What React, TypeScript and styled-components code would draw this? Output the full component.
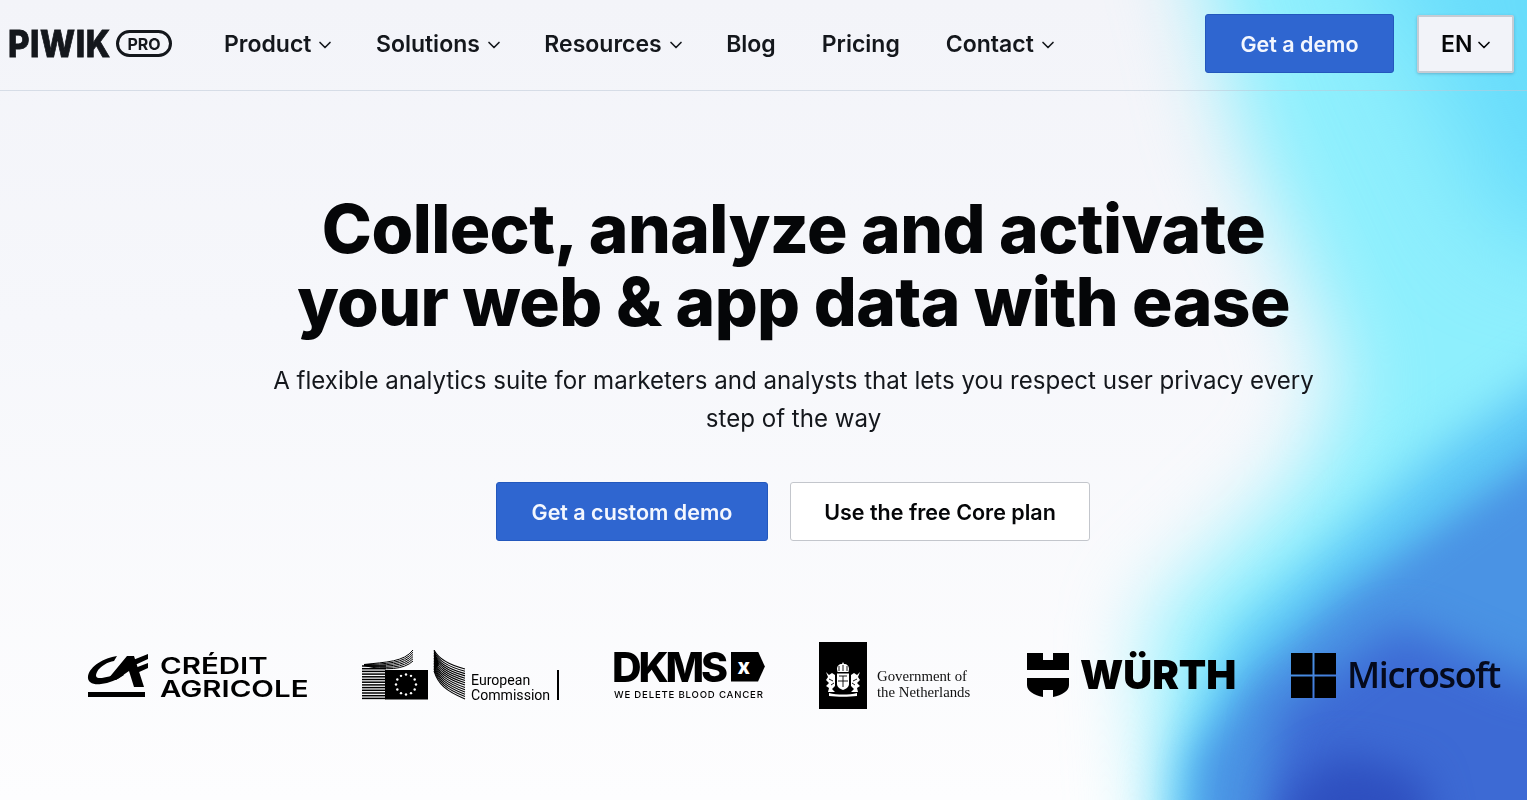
import React from 'react';
import styled, { createGlobalStyle } from 'styled-components';
import { ChevronDown } from 'lucide-react';

const GlobalStyle = createGlobalStyle`
  html, body {
    margin: 0;
    padding: 0;
    overflow: hidden;
  }
  * {
    box-sizing: border-box;
  }
`;

const navItems = [
  { label: 'Product', menu: true },
  { label: 'Solutions', menu: true },
  { label: 'Resources', menu: true },
  { label: 'Blog', menu: false },
  { label: 'Pricing', menu: false },
  { label: 'Contact', menu: true },
];

// soft colour shapes behind the page, painted bottom to top
const glows = [
  { color: '#8eeffd', blur: 42, points: [[1180, -120], [1700, -120], [1700, 900], [1170, 900], [1150, 620], [1300, 480], [1345, 384], [1300, 270], [1240, 135]] },
  { color: '#68dcfb', blur: 50, points: [[1340, -120], [1700, -120], [1700, 260], [1500, 230]] },
  { color: '#5cc6f6', blur: 24, points: [[1700, 270], [1700, 900], [1165, 900], [1175, 760], [1235, 633], [1336, 542], [1437, 452]] },
  { color: '#4a93e4', blur: 18, points: [[1700, 340], [1700, 900], [1190, 900], [1200, 760], [1250, 680], [1336, 600], [1527, 465]] },
  { color: '#3d6ad4', blur: 22, points: [[1400, 625], [1527, 680], [1700, 700], [1700, 900], [1250, 900], [1280, 710]] },
  { color: '#2e4fbf', blur: 20, points: [[1290, 790], [1340, 755], [1420, 775], [1440, 860], [1280, 860]] },
];

// the shape box starts 200px above the page so a glow is not cut at the top edge
const toPolygon = (points: number[][]) => points.map(([x, y]) => `${x}px ${y + 200}px`).join(', ');

const CreditMark = () => (
  <svg width="62" height="43" viewBox="0 0 62 43">
    <path d="M30 2 C17 4 3 12 1 22 C0 29 7 31 14 30 C22 29 30 26 37 21 L33 17 C26 22 18 24 13 24 C9 24 8 22 10 18 C13 12 21 8 27 7 Z" fill="#000" />
    <path d="M40 2 L47 2 L57 33 L47 33 L42 17 L29 26 L21 25 Z" fill="#000" />
    <path d="M46 6 L61 0 L61 5 L48 11 Z M48 14 L61 9 L61 14 L50 19 Z" fill="#000" />
    <rect x="1" y="38" width="57" height="5" fill="#000" />
  </svg>
);

const CommissionMark = () => (
  <svg width="104" height="50" viewBox="0 0 104 50">
    {Array.from({ length: 13 }).map((_, i) => (
      <path key={i} d={`M0 ${16 + i * 2.7} H24`} stroke="#000" strokeWidth="1.5" fill="none" />
    ))}
    {Array.from({ length: 6 }).map((_, i) => (
      <path
        key={i}
        d={`M2 ${14.5 + i * 0.2} C24 ${12 + i * 1.8} 42 ${12 + i * 1.5} 51 ${i * 2.2}`}
        stroke="#000"
        strokeWidth="1"
        fill="none"
      />
    ))}
    <rect x="23" y="20" width="43" height="29.5" fill="#000" />
    {Array.from({ length: 12 }).map((_, i) => {
      const a = (i * Math.PI) / 6;
      return <circle key={i} cx={44 + 10 * Math.cos(a)} cy={34.5 + 10 * Math.sin(a)} r="1.2" fill="#fff" />;
    })}
    {Array.from({ length: 14 }).map((_, i) => (
      <path
        key={i}
        d={`M72 ${i * 1.6} C76 ${8 + i * 2} 84 ${14 + i * 2.1} 103 ${19 + i * 2.3}`}
        stroke="#000"
        strokeWidth="1.1"
        fill="none"
      />
    ))}
    <path d="M72 0 L77 14 L72 22 Z" fill="#000" />
  </svg>
);

const CrestMark = () => (
  <svg width="48" height="67" viewBox="0 0 48 67">
    <rect width="48" height="67" fill="#000" />
    <g fill="#fff">
      <path d="M24 20 L25 22 C28 22 30 24 30 27 L29.5 30 H18.5 L18 27 C18 24 20 22 23 22 Z" />
      <path d="M18 31.5 H30 V42 C30 45 27 47 24 48 C21 47 18 45 18 42 Z" />
      <path d="M7 30 L10 33 L13 31 L16 33 L16 44 L13 47 L16 50 L9 50 L10 46 L7 44 L10 41 L7 38 L9 35 Z" />
      <path d="M41 30 L38 33 L35 31 L32 33 L32 44 L35 47 L32 50 L39 50 L38 46 L41 44 L38 41 L41 38 L39 35 Z" />
      <path d="M10 51 C18 53 30 53 38 51 L38 54 C30 55 18 55 10 54 Z" />
    </g>
    <g stroke="#000" strokeWidth="0.9" fill="none">
      <path d="M20 24 V29 M24 23 V29 M28 24 V29" />
      <path d="M20 34 H28 M24 34 V45 M19 39 H29" />
      <path d="M10 37 L14 39 M12 43 L15 41 M38 37 L34 39 M36 43 L33 41" />
    </g>
  </svg>
);

const ShieldMark = () => (
  <svg width="42" height="44" viewBox="0 0 42 44">
    <path d="M0 0 H16 V7 H26 V0 H42 V17 H0 Z" fill="#000" />
    <path d="M0 25 H42 V32 C42 38 35 42 26 44 V37 H16 V44 C7 42 0 38 0 32 Z" fill="#000" />
  </svg>
);

const WindowsMark = () => (
  <svg width="45" height="45" viewBox="0 0 45 45">
    <rect width="21.5" height="21.5" fill="#000" />
    <rect x="23.5" width="21.5" height="21.5" fill="#000" />
    <rect y="23.5" width="21.5" height="21.5" fill="#000" />
    <rect x="23.5" y="23.5" width="21.5" height="21.5" fill="#000" />
  </svg>
);

export default function App() {
  return (
    <Page>
      <GlobalStyle />
      <Backdrop>
        {glows.map((glow) => (
          <Glow key={glow.color} $blur={glow.blur}>
            <GlowShape $color={glow.color} $shape={toPolygon(glow.points)} />
          </Glow>
        ))}
      </Backdrop>

      <Content>
        <Header>
          <Brand>
            <BrandName>PIWIK</BrandName>
            <BrandPill>PRO</BrandPill>
          </Brand>
          <Nav>
            {navItems.map((item) => (
              <NavLink key={item.label}>
                {item.label}
                {item.menu && <ChevronDown size={20} strokeWidth={2} />}
              </NavLink>
            ))}
          </Nav>
          <HeaderActions>
            <HeaderDemo>Get a demo</HeaderDemo>
            <LangButton>
              EN
              <ChevronDown size={20} strokeWidth={2} />
            </LangButton>
          </HeaderActions>
        </Header>

        <Hero>
          <Headline>
            Collect, analyze and activate
            <br />
            your web &amp; app data with ease
          </Headline>
          <Lead>A flexible analytics suite for marketers and analysts that lets you respect user privacy every step of the way</Lead>
          <HeroActions>
            <PrimaryButton>Get a custom demo</PrimaryButton>
            <SecondaryButton>Use the free Core plan</SecondaryButton>
          </HeroActions>
        </Hero>

        <LogoRow>
          <LogoItem $width={220}>
            <CreditMark />
            <CreditName>
              CRÉDIT
              <br />
              AGRICOLE
            </CreditName>
          </LogoItem>
          <LogoItem $width={197}>
            <CommissionMark />
            <CommissionName>
              European
              <br />
              Commission
            </CommissionName>
            <Divider />
          </LogoItem>
          <LogoItem $width={150}>
            <DkmsBlock>
              <DkmsTop>
                DKMS
                <DkmsTag>x</DkmsTag>
              </DkmsTop>
              <DkmsLine>WE DELETE BLOOD CANCER</DkmsLine>
            </DkmsBlock>
          </LogoItem>
          <LogoItem $width={153}>
            <CrestMark />
            <GovName>
              Government of
              <br />
              the Netherlands
            </GovName>
          </LogoItem>
          <LogoItem $width={209}>
            <ShieldMark />
            <WurthName>WÜRTH</WurthName>
          </LogoItem>
          <LogoItem $width={208}>
            <WindowsMark />
            <MicrosoftName>Microsoft</MicrosoftName>
          </LogoItem>
        </LogoRow>
      </Content>
    </Page>
  );
}

const Page = styled.div`
  position: relative;
  width: 1527px;
  height: 800px;
  overflow: hidden;
  font-family: 'Inter', 'Liberation Sans', sans-serif;
  color: #050608;
  background: linear-gradient(180deg, #f3f4f9 0%, #f6f7fb 40%, #fdfdfe 100%);
`;

const Backdrop = styled.div`
  position: absolute;
  inset: 0;
  overflow: hidden;
`;

const Glow = styled.div<{ $blur: number }>`
  position: absolute;
  inset: 0;
  filter: blur(${(p) => p.$blur}px);
`;

const GlowShape = styled.div<{ $color: string; $shape: string }>`
  position: absolute;
  top: -200px;
  left: 0;
  width: 1900px;
  height: 1300px;
  background: ${(p) => p.$color};
  clip-path: polygon(${(p) => p.$shape});
`;

const Content = styled.div`
  position: relative;
`;

const Header = styled.header`
  height: 91px;
  padding: 14px 13px 17px 8px;
  display: flex;
  align-items: center;
  border-bottom: 1px solid rgba(190, 200, 215, 0.55);
`;

const Brand = styled.div`
  display: flex;
  align-items: center;
  gap: 7px;
  width: 216px;
  color: #14171c;
`;

const BrandName = styled.span`
  width: 101px;
  font-size: 37px;
  line-height: 28px;
  font-weight: 800;
  letter-spacing: 0.6px;
  -webkit-text-stroke: 0.8px #14171c;
  transform: scaleX(0.895);
  transform-origin: left;
`;

const BrandPill = styled.span`
  height: 27px;
  width: 56px;
  border: 3px solid #14171c;
  border-radius: 14px;
  display: flex;
  align-items: center;
  justify-content: center;
  font-size: 16px;
  font-weight: 700;
`;

const Nav = styled.nav`
  display: flex;
  align-items: center;
  gap: 46px;
  flex: 1;
`;

const NavLink = styled.a`
  display: flex;
  align-items: center;
  gap: 2px;
  font-size: 23px;
  font-weight: 600;
  color: #14171c;

  svg {
    margin: 3px -5.5px 0 2px;
  }
`;

const HeaderActions = styled.div`
  display: flex;
  align-items: center;
  gap: 23px;
`;

const HeaderDemo = styled.button`
  width: 189px;
  height: 59px;
  border: 1px solid #2358bd;
  border-radius: 3px;
  background: #2f66d0;
  color: #f4f7fe;
  font: 600 21.5px 'Inter', sans-serif;
`;

const LangButton = styled.button`
  width: 97px;
  height: 58px;
  padding: 0 0 0 22px;
  border: 2px solid #c6ccd4;
  border-radius: 2px;
  background: #f2f3f9;
  color: #050608;
  font: 600 23px 'Inter', sans-serif;
  display: flex;
  align-items: center;
  box-shadow: 0 1px 3px rgba(40, 70, 110, 0.3);

  svg {
    margin: 3px 0 0 2px;
  }
`;

const Hero = styled.section`
  display: flex;
  flex-direction: column;
  align-items: center;
  padding: 101px 0 0 60px;
`;

const Headline = styled.h1`
  margin: 0;
  font-size: 67.5px;
  line-height: 73px;
  font-weight: 800;
  letter-spacing: -0.6px;
  text-align: center;
  color: #050608;
`;

const Lead = styled.p`
  width: 1060px;
  margin: 24px 0 0;
  font-size: 24.1px;
  line-height: 38px;
  font-weight: 400;
  text-align: center;
  color: #14171c;
`;

const HeroActions = styled.div`
  display: flex;
  gap: 22px;
  margin: 44px 0 0 -1px;
`;

const PrimaryButton = styled.button`
  width: 272px;
  height: 59px;
  border: 1px solid #2358bd;
  border-radius: 3px;
  background: #2f66d0;
  color: #f4f7fe;
  font: 600 21.5px 'Inter', sans-serif;
`;

const SecondaryButton = styled.button`
  width: 300px;
  height: 59px;
  border: 1.5px solid #c3c6cc;
  border-radius: 3px;
  background: #fff;
  color: #050608;
  font: 600 21.5px 'Inter', sans-serif;
`;

const LogoRow = styled.div`
  display: flex;
  align-items: center;
  gap: 55px;
  padding-left: 87px;
  margin-top: 100px;
  height: 68px;
`;

const LogoItem = styled.div<{ $width: number }>`
  width: ${(p) => p.$width}px;
  flex: none;
  display: flex;
  align-items: center;
  color: #000;

  svg {
    flex: none;
  }
`;

const CreditName = styled.span`
  margin: 6px 0 0 11px;
  font: 600 23px/23px 'Inter', sans-serif;
  white-space: nowrap;
  transform: scaleX(1.28);
  transform-origin: left;
`;

const CommissionName = styled.span`
  margin: 26px 0 0 5px;
  font: 400 14.1px/15.5px 'Roboto', sans-serif;
  white-space: nowrap;
`;

const Divider = styled.span`
  width: 2px;
  height: 30px;
  margin: 20px 0 0 7px;
  background: #000;
`;

const DkmsBlock = styled.div`
  display: flex;
  flex-direction: column;
  margin-left: -2px;
`;

const DkmsTop = styled.div`
  display: flex;
  align-items: center;
  font: 800 41px/34px 'Inter', sans-serif;
  letter-spacing: -3.2px;
`;

const DkmsTag = styled.span`
  width: 34px;
  height: 30px;
  margin-left: 6px;
  padding-right: 8px;
  background: #000;
  color: #fff;
  clip-path: polygon(0 0, 80% 0, 100% 50%, 80% 100%, 0 100%);
  display: flex;
  align-items: center;
  justify-content: center;
  letter-spacing: 0;
  font: 800 21px/1 'Inter', sans-serif;
`;

const DkmsLine = styled.span`
  margin: 5px 0 0 2px;
  font: 500 9.6px/12px 'Inter', sans-serif;
  letter-spacing: 0.8px;
  white-space: nowrap;
`;

const GovName = styled.span`
  margin: 17px 0 0 10px;
  font: 400 14.8px/16px 'Liberation Serif', serif;
  color: #111;
  white-space: nowrap;
`;

const WurthName = styled.span`
  margin-left: 11px;
  font: 900 40px/44px 'Inter', sans-serif;
`;

const MicrosoftName = styled.span`
  margin-left: 11px;
  font: 600 36px/44px 'Open Sans', sans-serif;
  letter-spacing: -1.4px;
  color: #050a1c;
`;
